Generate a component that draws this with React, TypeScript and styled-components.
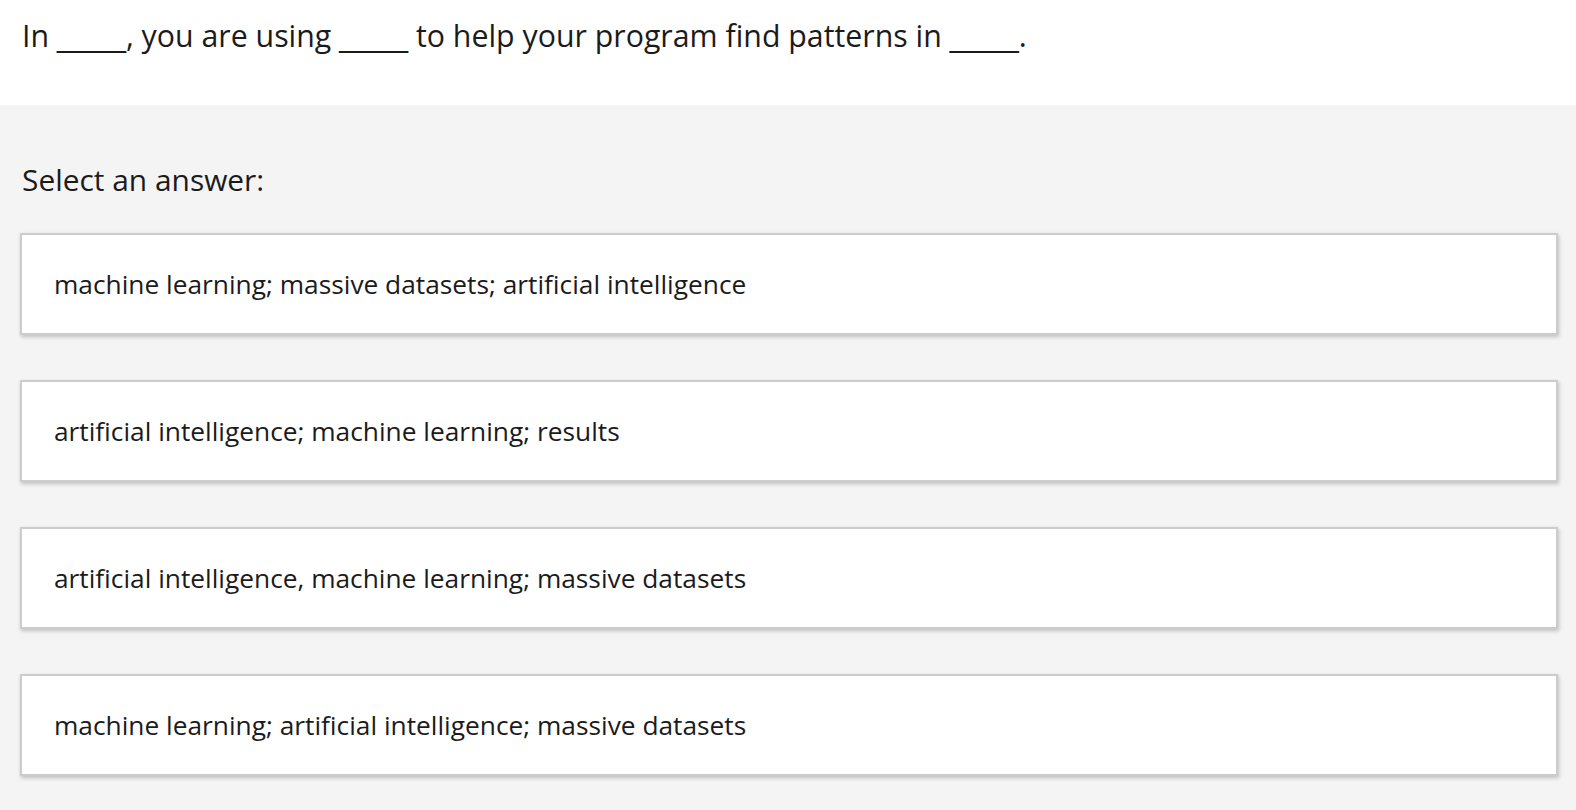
import * as React from 'react';
import styled, { createGlobalStyle } from 'styled-components';

const GlobalStyle = createGlobalStyle`
  html, body {
    margin: 0;
    padding: 0;
    background: #f4f4f4;
  }
  body {
    font-family: "Open Sans", "Noto Sans", sans-serif;
    color: #1b1b1b;
  }
`;

const answers = [
  'machine learning; massive datasets; artificial intelligence',
  'artificial intelligence; machine learning; results',
  'artificial intelligence, machine learning; massive datasets',
  'machine learning; artificial intelligence; massive datasets',
];

export default function App() {
  return (
    <>
      <GlobalStyle />
      <QuestionBar>
        <Question>
          In <Blank>____</Blank>, you are using <Blank>____</Blank> to help your program find
          patterns in <Blank>____</Blank>.
        </Question>
      </QuestionBar>
      <AnswerArea>
        <Prompt>Select an answer:</Prompt>
        <AnswerList>
          {answers.map((a) => (
            <AnswerCard key={a} type="button">
              {a}
            </AnswerCard>
          ))}
        </AnswerList>
      </AnswerArea>
    </>
  );
}

const QuestionBar = styled.header`
  background: #ffffff;
  height: 105px;
  padding: 14px 22px 0;
  box-sizing: border-box;
`;

const Question = styled.h1`
  margin: 0;
  font-size: 30.3px;
  font-weight: 400;
  line-height: 44px;
`;

const Blank = styled.span`
  font-family: "Liberation Sans", Arial, sans-serif;
  font-size: 31px;
`;

const AnswerArea = styled.main`
  padding: 55px 18px 20px 20px;
`;

const Prompt = styled.h2`
  margin: 0 0 33px 2px;
  font-size: 29.9px;
  font-weight: 400;
  line-height: 40px;
`;

const AnswerList = styled.div`
  display: flex;
  flex-direction: column;
  gap: 45px;
`;

const AnswerCard = styled.button`
  display: flex;
  align-items: center;
  height: 102px;
  width: 100%;
  padding: 0 32px;
  box-sizing: border-box;
  background: #ffffff;
  border: 2px solid #cccccc;
  box-shadow: 1px 2px 4px rgba(0, 0, 0, 0.22);
  font-family: inherit;
  font-size: 26.3px;
  color: #1b1b1b;
  text-align: left;
  cursor: pointer;
`;
